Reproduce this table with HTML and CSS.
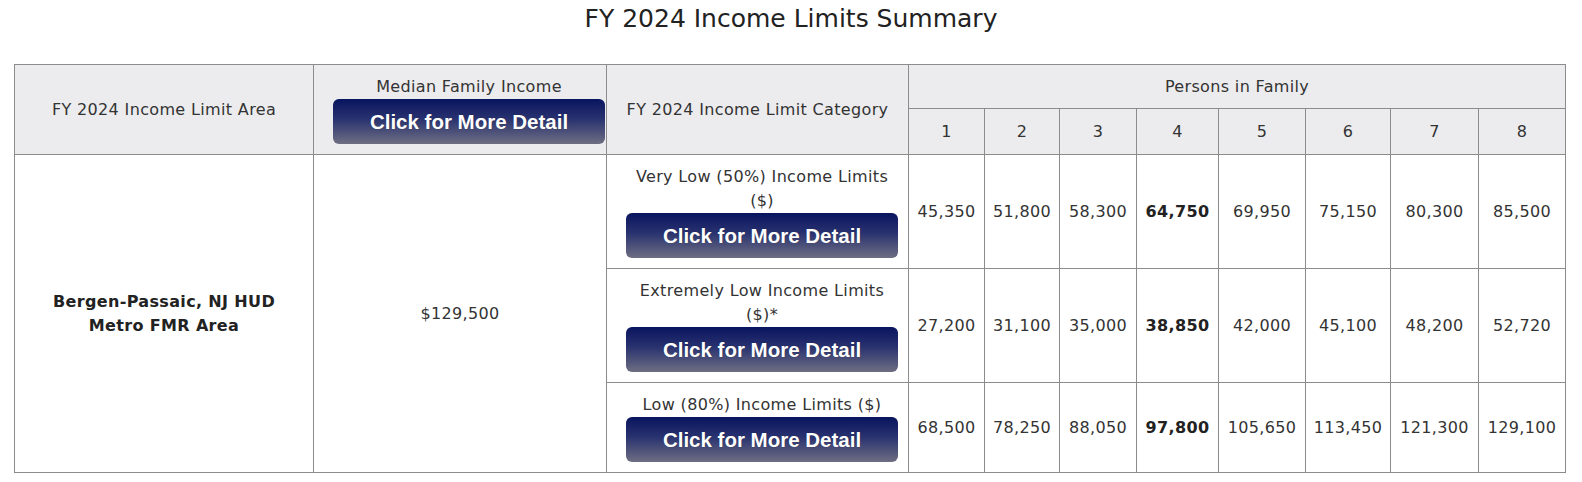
FILE: index.html
```html
<!DOCTYPE html>
<html lang="en">
<head>
<meta charset="utf-8">
<title>FY 2024 Income Limits Summary</title>
<link rel="stylesheet" href="styles.css">
</head>
<body>
<h1 class="title">FY 2024 Income Limits Summary</h1>
<table class="il-table">
  <colgroup>
    <col class="c-area"><col class="c-mfi"><col class="c-cat">
    <col class="c-n1"><col class="c-n2"><col class="c-n3"><col class="c-n4">
    <col class="c-n5"><col class="c-n6"><col class="c-n7"><col class="c-n8">
  </colgroup>
  <thead>
    <tr class="hr1">
      <th rowspan="2">FY 2024 Income Limit Area</th>
      <th rowspan="2" class="btn-cell"><div class="lbl">Median Family Income</div><a class="btn" href="#">Click for More Detail</a></th>
      <th rowspan="2">FY 2024 Income Limit Category</th>
      <th colspan="8">Persons in Family</th>
    </tr>
    <tr class="hr2">
      <th>1</th><th>2</th><th>3</th><th>4</th><th>5</th><th>6</th><th>7</th><th>8</th>
    </tr>
  </thead>
  <tbody>
    <tr class="r1">
      <td rowspan="3" class="area">Bergen-Passaic, NJ HUD<br>Metro FMR Area</td>
      <td rowspan="3">$129,500</td>
      <td class="btn-cell"><div class="lbl">Very Low (50%) Income Limits<br>($)</div><a class="btn" href="#">Click for More Detail</a></td>
      <td>45,350</td><td>51,800</td><td>58,300</td><td class="b">64,750</td><td>69,950</td><td>75,150</td><td>80,300</td><td>85,500</td>
    </tr>
    <tr class="r2">
      <td class="btn-cell"><div class="lbl">Extremely Low Income Limits<br>($)*</div><a class="btn" href="#">Click for More Detail</a></td>
      <td>27,200</td><td>31,100</td><td>35,000</td><td class="b">38,850</td><td>42,000</td><td>45,100</td><td>48,200</td><td>52,720</td>
    </tr>
    <tr class="r3">
      <td class="btn-cell"><div class="lbl">Low (80%) Income Limits ($)</div><a class="btn" href="#">Click for More Detail</a></td>
      <td>68,500</td><td>78,250</td><td>88,050</td><td class="b">97,800</td><td>105,650</td><td>113,450</td><td>121,300</td><td>129,100</td>
    </tr>
  </tbody>
</table>
</body>
</html>
```
FILE: styles.css
```css
html, body {
  margin: 0;
  padding: 0;
  background: #ffffff;
}
body {
  font-family: "DejaVu Sans", Verdana, sans-serif;
  color: #333333;
}
.title {
  margin: 0;
  padding-top: 3px;
  height: 60px;
  box-sizing: border-box;
  text-align: center;
  font-size: 25px;
  line-height: 32px;
  font-weight: normal;
  color: #222222;
}
.il-table {
  margin: 4px 0 0 14px;
  width: 1552px;
  table-layout: fixed;
  border-collapse: collapse;
  font-size: 16px;
  line-height: 24px;
  letter-spacing: 0.35px;
}
.c-area { width: 299px; }
.c-mfi { width: 293px; }
.c-cat { width: 302px; }
.c-n1 { width: 76px; }
.c-n2 { width: 75px; }
.c-n3 { width: 77px; }
.c-n4 { width: 82px; }
.c-n5 { width: 87px; }
.c-n6 { width: 85px; }
.c-n7 { width: 88px; }
.c-n8 { width: 87px; }
.il-table th, .il-table td {
  border: 1px solid #8c8c8c;
  text-align: center;
  vertical-align: middle;
  padding: 0;
}
.il-table th {
  background: #ececee;
  font-weight: normal;
  color: #333333;
}
.hr1 { height: 44px; }
.hr2 { height: 45px; }
.il-table td.btn-cell, .il-table th.btn-cell {
  padding: 10px 0 10px 19px;
}
.lbl {
  width: 272px;
  text-align: center;
}
.btn {
  display: block;
  width: 272px;
  height: 45px;
  box-sizing: border-box;
  border-radius: 6px;
  background: linear-gradient(to bottom, #08145e 0%, #2a3370 45%, #6e6e82 100%);
  color: #ffffff;
  font-family: "Liberation Sans", Arial, sans-serif;
  font-weight: bold;
  font-size: 20.5px;
  letter-spacing: 0;
  line-height: 45px;
  text-align: center;
  text-decoration: none;
  text-shadow: 0 0 1px rgba(0,0,0,0.4);
}
.area {
  font-weight: bold;
  color: #222222;
}
.b {
  font-weight: bold;
  color: #222222;
}
```
